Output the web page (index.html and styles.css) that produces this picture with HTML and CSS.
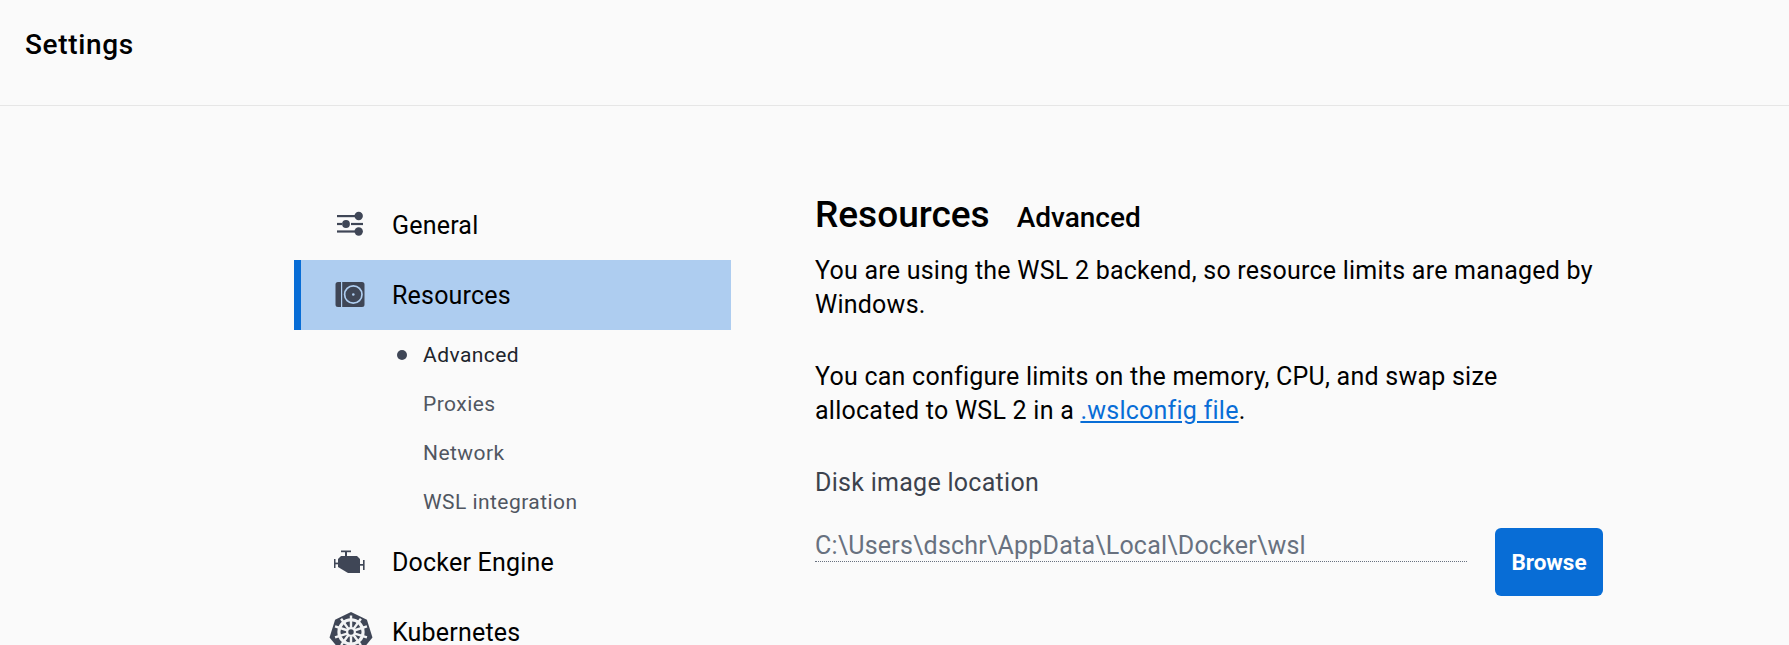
FILE: index.html
```html
<!DOCTYPE html>
<html lang="en">
<head>
<meta charset="utf-8">
<title>Settings</title>
<link rel="stylesheet" href="styles.css">
</head>
<body>
<header class="topbar"><h1 class="title">Settings</h1></header>
<div class="layout">
  <nav class="sidebar">
    <a class="nav-item">
      <svg class="nav-icon" viewBox="0 0 32 32"><g fill="#3f4656"><rect x="3" y="6" width="18" height="2.200"/><circle cx="24.700" cy="7" r="4.200"/><rect x="3" y="13.900" width="5" height="2.200"/><circle cx="12" cy="15" r="3.900"/><rect x="17" y="13.900" width="12" height="2.200"/><rect x="3" y="21.400" width="18" height="2.200"/><circle cx="24.700" cy="22.500" r="4.200"/></g></svg>
      <span>General</span>
    </a>
    <a class="nav-item active">
      <svg class="nav-icon" viewBox="0 0 32 32"><path fill="#3f4656" d="M4 3h3v25H4a2.500 2.500 0 0 1-2.500-2.500v-20A2.500 2.500 0 0 1 4 3zM8.200 3H28a2.500 2.500 0 0 1 2.500 2.500v20A2.500 2.500 0 0 1 28 28H8.200z"/><circle cx="19.300" cy="15.500" r="8.700" fill="none" stroke="#aecdf0" stroke-width="1.700"/><circle cx="19.300" cy="15.500" r="1.300" fill="#aecdf0"/></svg>
      <span>Resources</span>
    </a>
    <ul class="subnav">
      <li class="sub-item current">Advanced</li>
      <li class="sub-item">Proxies</li>
      <li class="sub-item">Network</li>
      <li class="sub-item">WSL integration</li>
    </ul>
    <a class="nav-item">
      <svg class="nav-icon" viewBox="0 0 32 32"><g fill="#3f4656"><rect x="7" y="4.500" width="10" height="1.700"/><rect x="11" y="6" width="2" height="5"/><path d="M4 13l3-3h16l3 3v14H14L4 21z"/><rect x="0" y="13" width="1.500" height="9"/><rect x="1" y="16.600" width="4" height="1.700"/><rect x="29" y="14" width="1.600" height="10"/><rect x="25" y="18" width="5" height="1.700"/></g></svg>
      <span>Docker Engine</span>
    </a>
    <a class="nav-item">
      <svg class="nav-icon kube" viewBox="1 0 40 40"><path fill="#3f4656" d="M21 1 35.500 8l5 16-10.500 13h-18L1.500 24l5-16z"/><g fill="none" stroke="#f2f3f4" transform="translate(0 -1.500)"><circle cx="21" cy="20.500" r="11" stroke-width="2.800"/><circle cx="21" cy="20.500" r="3.500" stroke-width="2"/><path stroke-width="2.200" d="M21 5.500v11M21 24.500v11M6.500 15.500l11 3.500M24.500 22l11 3.500M35.500 15.500 24.500 19M17.500 22l-11 3.500M12 8.500l6.500 9M23.500 23.500l6.500 9M30 8.500l-6.500 9M18.500 23.500 12 32.500"/></g></svg>
      <span>Kubernetes</span>
    </a>
  </nav>
  <main class="content">
    <div class="heading"><h2 class="h-main">Resources</h2><h3 class="h-sub">Advanced</h3></div>
    <p class="para">You are using the WSL 2 backend, so resource limits are managed by Windows.</p>
    <p class="para">You can configure limits on the memory, CPU, and swap size allocated to WSL 2 in a <a class="link">.wslconfig file</a>.</p>
    <label class="field-label">Disk image location</label>
    <div class="field-row">
      <div class="path">C:\Users\dschr\AppData\Local\Docker\wsl</div>
      <button class="browse">Browse</button>
    </div>
  </main>
</div>
</body>
</html>
```
FILE: styles.css
```css
* { box-sizing: border-box; }
html, body { height: 100%; }
body {
  margin: 0;
  height: 645px;
  overflow: hidden;
  background: #fafafa;
  color: #000;
  font-family: Roboto, "Liberation Sans", sans-serif;
}
.topbar {
  height: 106px;
  padding: 29px 25px 0;
  border-bottom: 1px solid #e6e6e6;
}
.title { margin: 0; font-size: 28px; line-height: 32px; font-weight: 500; letter-spacing: .65px; }
.layout { display: flex; padding: 84px 0 0 294px; }
.sidebar { width: 437px; flex: none; margin-right: 84px; }
.nav-item {
  display: flex;
  align-items: center;
  height: 70px;
  padding-left: 40px;
  font-size: 25px;
  letter-spacing: .2px;
}
.nav-icon { width: 32px; height: 32px; margin-right: 26px; flex: none; }
.kube { width: 44px; height: 44px; margin: 2px 19px 0 -5px; }
.active { background: #aecdf0; border-left: 7px solid #086dd6; padding-left: 33px; }
.subnav { list-style: none; margin: 0; padding: 1px 0 0 129px; }
.sub-item {
  position: relative;
  height: 49px;
  line-height: 49px;
  font-size: 21px;
  letter-spacing: .45px;
  color: #505661;
}
.current { color: #20242c; }
.current::before {
  content: "";
  position: absolute;
  left: -26px;
  top: 19px;
  width: 10px;
  height: 10px;
  border-radius: 50%;
  background: #3f4656;
}
.content { width: 789px; flex: none; }
.heading { display: flex; align-items: baseline; gap: 27px; margin-top: 1px; }
.h-main { margin: 0; font-size: 37px; line-height: 48px; font-weight: 500; }
.h-sub { margin: 0; font-size: 28px; font-weight: 500; }
.para { margin: 0 0 38px; max-width: 782px; font-size: 25px; line-height: 34px; letter-spacing: .24px; }
.heading + .para { margin-top: 15px; }
.link { color: #086dd6; text-decoration: underline; }
.field-label { display: block; margin-top: 40px; font-size: 25px; line-height: 30px; letter-spacing: .28px; color: #3c424d; }
.field-row { display: flex; align-items: flex-start; margin-top: 30px; }
.path {
  width: 652px;
  height: 34px;
  padding-top: 2px;
  font-size: 25px;
  line-height: 32px;
  letter-spacing: .22px;
  color: #68717f;
  border-bottom: 1px dotted #68717f;
}
.browse {
  width: 108px;
  height: 68px;
  margin-left: 28px;
  border: 0;
  border-radius: 6px;
  background: #086dd6;
  color: #fff;
  font: 700 22.500px Roboto, "Liberation Sans", sans-serif;
}
```
